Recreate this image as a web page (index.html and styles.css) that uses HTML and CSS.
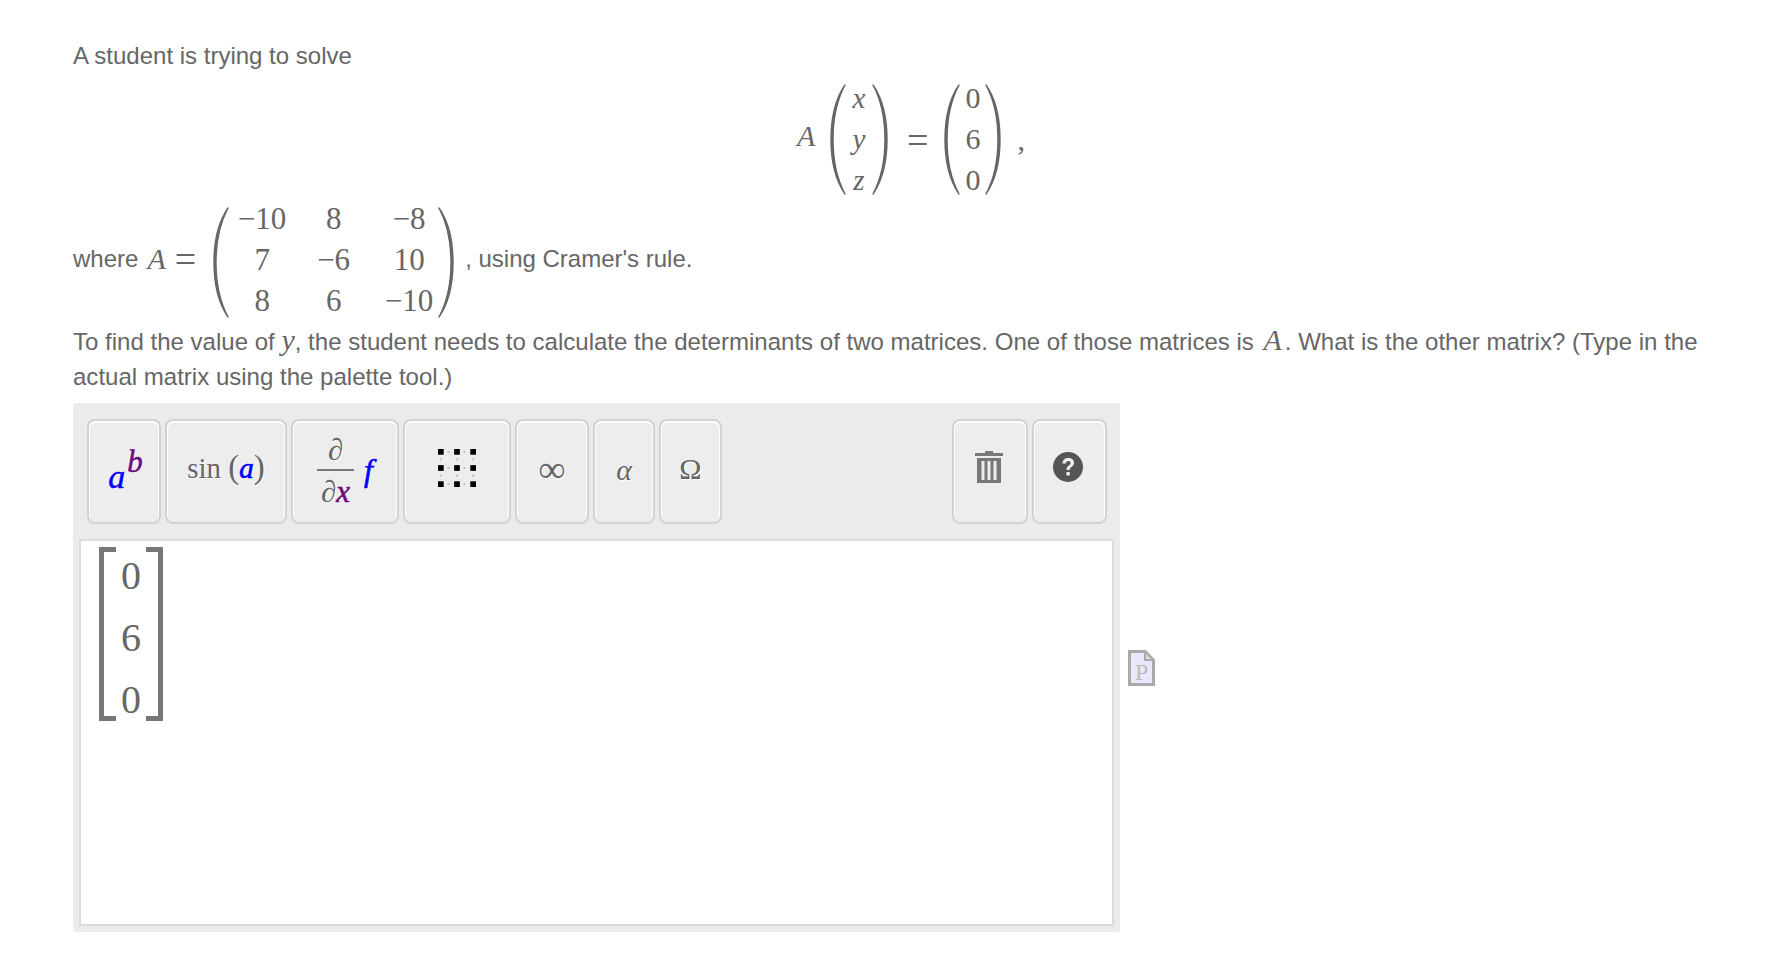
FILE: index.html
```html
<!DOCTYPE html>
<html lang="en">
<head>
<meta charset="utf-8">
<title>Cramer's rule question</title>
<link rel="stylesheet" href="styles.css">
</head>
<body>
<main class="page">
  <p class="line">A student is trying to solve</p>

  <div class="equation">
    <i class="mvar big-a">A</i>
    <svg class="paren" viewBox="0 0 17 111" preserveAspectRatio="none"><path d="M16 1C7 14 2 34 2 55.500S7 97 16 110C9 97 4 77 4 55.500S9 14 16 1Z"/></svg>
    <div class="vector vec-vars"><i>x</i><i>y</i><i>z</i></div>
    <svg class="paren flip" viewBox="0 0 17 111" preserveAspectRatio="none"><path d="M16 1C7 14 2 34 2 55.500S7 97 16 110C9 97 4 77 4 55.500S9 14 16 1Z"/></svg>
    <span class="mrel">=</span>
    <svg class="paren" viewBox="0 0 17 111" preserveAspectRatio="none"><path d="M16 1C7 14 2 34 2 55.500S7 97 16 110C9 97 4 77 4 55.500S9 14 16 1Z"/></svg>
    <div class="vector vec-nums"><span>0</span><span>6</span><span>0</span></div>
    <svg class="paren flip" viewBox="0 0 17 111" preserveAspectRatio="none"><path d="M16 1C7 14 2 34 2 55.500S7 97 16 110C9 97 4 77 4 55.500S9 14 16 1Z"/></svg>
    <span class="mcomma">,</span>
  </div>

  <div class="where">
    <span class="lifted">where</span>
    <i class="mvar where-a lifted">A</i>
    <span class="mrel where-eq lifted">=</span>
    <svg class="paren" viewBox="0 0 17 111" preserveAspectRatio="none"><path d="M16 1C7 14 2 34 2 55.500S7 97 16 110C9 97 4 77 4 55.500S9 14 16 1Z"/></svg>
    <div class="matrix">
      <span>−10</span><span>8</span><span>−8</span>
      <span>7</span><span>−6</span><span>10</span>
      <span>8</span><span>6</span><span>−10</span>
    </div>
    <svg class="paren flip" viewBox="0 0 17 111" preserveAspectRatio="none"><path d="M16 1C7 14 2 34 2 55.500S7 97 16 110C9 97 4 77 4 55.500S9 14 16 1Z"/></svg>
    <span class="after-matrix lifted">, using Cramer's rule.</span>
  </div>

  <p class="question">To find the value of <i class="mvar inline">y</i>, the student needs to calculate the determinants of two matrices. One of those matrices is <i class="mvar inline inline-a">A</i>. What is the other matrix? (Type in the <span class="question-end">actual matrix using the palette tool.)</span></p>

  <div class="answer-row">
    <section class="editor">
      <div class="toolbar">
        <button class="btn b-power"><span class="tex"><i class="blue">a</i><sup class="purple">b</sup></span></button>
        <button class="btn b-sin"><span class="tex">sin <span class="pn">(</span><i class="blue">a</i><span class="pn">)</span></span></button>
        <button class="btn b-deriv">
          <span class="frac tex"><span class="num">∂</span><span class="den">∂<i class="purple">x</i></span></span>
          <i class="tex blue fn">f</i>
        </button>
        <button class="btn b-grid">
          <svg class="grid-icon" viewBox="0 0 40 40">
            <g class="dots-small">
              <rect x="10" y="2" width="2" height="2"/><rect x="27" y="2" width="2" height="2"/>
              <rect x="10" y="19" width="2" height="2"/><rect x="27" y="19" width="2" height="2"/>
              <rect x="10" y="36" width="2" height="2"/><rect x="27" y="36" width="2" height="2"/>
              <rect x="2" y="10" width="2" height="2"/><rect x="19" y="10" width="2" height="2"/><rect x="36" y="10" width="2" height="2"/>
              <rect x="2" y="27" width="2" height="2"/><rect x="19" y="27" width="2" height="2"/><rect x="36" y="27" width="2" height="2"/>
            </g>
            <rect x="0" y="0" width="6" height="6"/><rect x="17" y="0" width="6" height="6"/><rect x="34" y="0" width="6" height="6"/>
            <rect x="0" y="17" width="6" height="6"/><rect x="17" y="17" width="6" height="6"/><rect x="34" y="17" width="6" height="6"/>
            <rect x="0" y="34" width="6" height="6"/><rect x="17" y="34" width="6" height="6"/><rect x="34" y="34" width="6" height="6"/>
          </svg>
        </button>
        <button class="btn b-inf"><span class="tex sym inf">∞</span></button>
        <button class="btn b-alpha"><i class="tex sym">α</i></button>
        <button class="btn b-omega"><span class="tex sym">Ω</span></button>
        <button class="btn b-trash">
          <svg class="trash-icon" viewBox="0 0 28 32">
            <path d="M10 0h8v2h10v3H0V2h10zM2 7h24v25H2zM6.500 10v19h3V10zM12.500 10v19h3V10zM18.500 10v19h3V10z" fill-rule="evenodd"/>
          </svg>
        </button>
        <button class="btn b-help">
          <svg class="help-icon" viewBox="0 0 30 30">
            <circle cx="15" cy="15" r="15"/>
            <path class="q" d="M9.500 11.500C9.500 8 12 6 15.300 6C18.800 6 21 8 21 10.800C21 13.200 19.600 14.300 18 15.400C16.900 16.200 16.700 16.700 16.700 18H13.500C13.500 15.700 14.100 14.700 15.700 13.500C17 12.500 17.600 12 17.600 10.900C17.600 9.700 16.700 9 15.300 9C13.800 9 12.900 10 12.800 11.500ZM13.400 20H16.800V23.400H13.400Z"/>
          </svg>
        </button>
      </div>
      <div class="input">
        <div class="bracket-matrix">
          <span class="bracket"></span>
          <div class="cells"><span>0</span><span>6</span><span>0</span></div>
          <span class="bracket right"></span>
        </div>
      </div>
    </section>
    <svg class="page-icon" viewBox="0 0 27 36">
      <path class="sheet" d="M1.500 1.500H17L25.500 10V34.500H1.500Z"/>
      <path class="fold" d="M17 1.500V10H25.500Z"/>
      <text class="page-p" x="7" y="30">P</text>
    </svg>
  </div>
</main>
</body>
</html>
```

FILE: styles.css
```css
* { box-sizing: border-box; }
html, body { margin: 0; background: #fff; }
body {
  font-family: "Liberation Sans", Arial, sans-serif;
  font-size: 24px;
  line-height: 35px;
  color: #666;
}
.page { padding: 38px 73px 0; }
p { margin: 0; }

.mvar { font-family: "Liberation Serif", serif; font-style: italic; }
.inline { font-size: 30px; line-height: 0; }
.inline-a { margin: 0 3px; }
.lifted { margin-bottom: 8px; }
.question { font-size: 24.04px; }
.question-end { display: block; }

.paren { display: block; width: 17px; height: 111px; flex: none; overflow: visible; }
.paren path { fill: #666; stroke: #666; stroke-width: 1.4; stroke-linejoin: round; }
.flip { transform: scaleX(-1); }

.equation {
  display: flex;
  align-items: center;
  height: 111px;
  margin: 11px 0 0 724px;
  font-family: "Liberation Serif", serif;
  font-size: 30px;
}
.big-a { width: 32px; font-size: 30px; margin-bottom: 8px; }
.vector {
  display: grid;
  grid-auto-rows: 41px;
  justify-items: center;
  align-items: center;
  line-height: 1;
}
.vec-vars { width: 26px; font-size: 29px; }
.vec-nums { width: 25px; margin-bottom: 2px; }
.mrel { font-family: "Liberation Serif", serif; font-size: 38px; line-height: 1; }
.equation .mrel { margin: 0 15px 0 18px; }
.mcomma { margin-left: 15px; }

.where {
  display: flex;
  align-items: center;
  height: 111px;
  margin-top: 12px;
}
.where-a { font-size: 30px; margin-left: 9px; }
.where-eq { margin: 0 16px 8px 9px; }
.matrix {
  display: grid;
  grid-template-columns: 66px 77px 74px;
  grid-auto-rows: 41px;
  justify-items: center;
  align-items: center;
  width: 217px;
  margin: 0 -8px 7px 0;
  font-family: "Liberation Serif", serif;
  font-size: 31px;
  line-height: 1;
}
.after-matrix { margin-left: 10px; }

.question { margin-top: 6px; }

.answer-row { display: flex; align-items: center; gap: 8px; margin-top: 9px; }
.editor {
  display: flex;
  flex-direction: column;
  flex: none;
  width: 1047px;
  height: 529px;
  background: #ebebeb;
  border-radius: 3px;
  padding: 0 6px 6px 6px;
}
.toolbar { display: flex; gap: 4px; padding: 16px 7px 15px 8px; flex: none; }
.btn {
  display: flex;
  align-items: center;
  justify-content: center;
  height: 105px;
  padding: 0 0 5px;
  background: #ededed;
  border: 2px solid #d2d2d2;
  border-radius: 8px;
  box-shadow: inset 0 1px 0 1px #fff;
  font: inherit;
  color: #666;
  flex: none;
}
.b-power { width: 74px; }
.b-sin { width: 122px; }
.b-deriv { width: 108px; }
.b-grid { width: 108px; }
.b-inf { width: 74px; }
.b-alpha { width: 62px; }
.b-omega { width: 63px; }
.b-trash { width: 76px; margin-left: auto; padding-right: 3px; }
.b-help { width: 75px; padding-right: 3px; }

.tex {
  font-family: "Liberation Serif", serif;
  font-size: 29px;
  line-height: 1;
  text-shadow: 1px 1px 0 #fff;
}
.blue { color: #0000ff; }
.purple { color: #6a0c7e; }
.b-power { padding: 11px 0 0 3px; }
.b-power .tex { font-size: 34px; -webkit-text-stroke: .5px currentColor; }
.b-power i { -webkit-text-stroke: .5px #0000ff; }
.b-power sup { font-size: 31px; line-height: 0; vertical-align: 16px; font-style: italic; margin-left: 2px; -webkit-text-stroke: .5px #6a0c7e; }
.b-sin { padding-bottom: 9px; }
.b-sin .tex { font-size: 29px; }
.b-sin i { -webkit-text-stroke: .6px #0000ff; }
.pn { font-size: 33px; }
.b-deriv { padding-bottom: 3px; }
.frac {
  display: inline-flex;
  flex-direction: column;
  align-items: center;
  font-size: 31px;
  width: 37px;
}
.num { border-bottom: 2px solid #777; width: 100%; text-align: center; padding-bottom: 4px; }
.den { padding-top: 5px; white-space: nowrap; }
.den i { -webkit-text-stroke: .6px #6a0c7e; }
.fn { margin-left: 10px; font-size: 32px; -webkit-text-stroke: .6px #0000ff; }
.sym { font-size: 30px; }
.inf { font-size: 38px; }
.b-alpha { padding-bottom: 3px; }
.b-omega { padding-bottom: 6px; }
.grid-icon { width: 38px; height: 38px; margin-bottom: 2px; }
.dots-small rect { fill: #bbb; }
.trash-icon { width: 28px; height: 32px; fill: #777; margin-bottom: 5px; }
.help-icon { width: 30px; height: 30px; margin-bottom: 5px; }
.help-icon circle { fill: #555; }
.help-icon .q { fill: #eee; }

.input {
  flex: 1;
  background: #fff;
  border: 2px solid #dcdcdc;
  padding: 6px 0 0 18px;
}
.bracket-matrix { display: flex; width: 64px; height: 174px; }
.bracket {
  width: 17px;
  height: 174px;
  border: 5px solid #777;
  border-right: 0;
  flex: none;
}
.bracket.right { border: 5px solid #777; border-left: 0; }
.cells {
  display: grid;
  grid-auto-rows: 62px;
  justify-items: center;
  align-items: center;
  width: 30px;
  margin-top: -2px;
  height: 176px;
  font-family: "Liberation Serif", serif;
  font-size: 40px;
  line-height: 1;
}

.page-icon { width: 27px; height: 36px; flex: none; }
.sheet { fill: #e8e8fa; stroke: #aaa; stroke-width: 3; }
.fold { fill: #ddd; stroke: #aaa; stroke-width: 2; }
.page-p { font-family: "Liberation Serif", serif; font-size: 24px; fill: #bbb; }
```
